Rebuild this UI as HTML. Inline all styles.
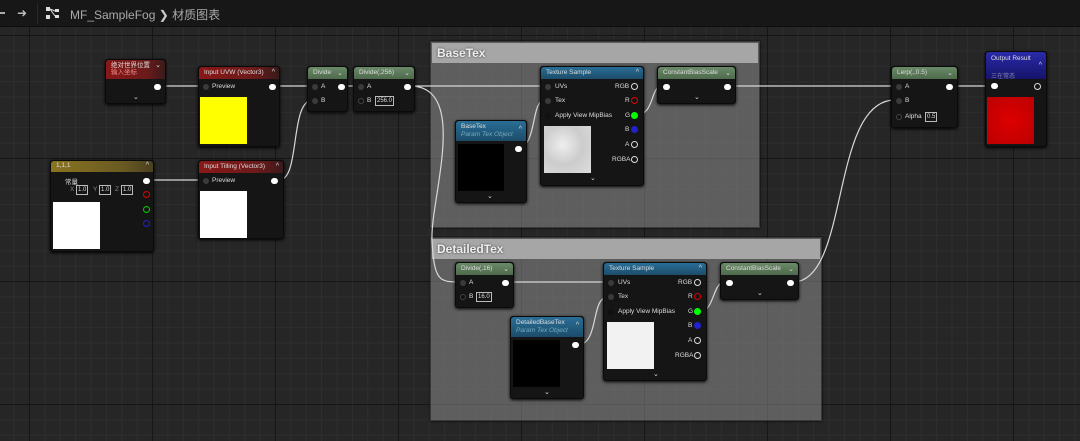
<!DOCTYPE html>
<html><head><meta charset="utf-8"><style>
*{margin:0;padding:0;box-sizing:border-box}
body{width:1080px;height:441px;overflow:hidden;background:#262626;font-family:"Liberation Sans","Noto Sans CJK SC",sans-serif;position:relative;color:#ddd}
#grid{position:absolute;left:0;top:27px;width:1080px;height:414px;
background-image:
linear-gradient(90deg,#161616 1px,transparent 1px),
linear-gradient(0deg,#161616 1px,transparent 1px),
linear-gradient(90deg,#2e2e2e 1px,transparent 1px),
linear-gradient(0deg,#2e2e2e 1px,transparent 1px);
background-size:123px 123px,123px 123px,15.375px 15.375px,15.375px 15.375px;
background-position:29px 9px,29px 9px,29px 9px,29px 9px}
#top{position:absolute;left:0;top:0;width:1080px;height:27px;background:#171717;border-bottom:1px solid #0e0e0e}
.cm{position:absolute;background:rgba(140,140,140,0.55);border:1px solid #3a3a3a;box-shadow:0 0 2px #000}
.cm .h{height:20px;background:#a6a6a6;color:#eee;font-size:12px;font-weight:bold;padding:3px 5px;text-shadow:0 0 2px #333;margin:1px}
.n{position:absolute;background:#151515;border-radius:3px;box-shadow:0 1px 3px #000;font-size:6.5px;color:#ddd;border:1px solid #0a0a0a}
.n .h{height:12px;border-radius:3px 3px 0 0;padding:2px 5px;font-size:6.5px;color:#ddd;position:relative}
.n .h .c{position:absolute;right:4px;top:2px;font-size:7px}
.t{position:absolute;white-space:nowrap}
.pin{position:absolute;width:6px;height:6px;border-radius:50%;background:#3a3a3a}
.po{position:absolute;width:7px;height:6px;border-radius:3px;background:#fff}
.ring{position:absolute;width:7px;height:7px;border-radius:50%;border:1.5px solid #ddd}
.box{position:absolute;border:1px solid #bbb;font-size:6px;padding:0 1px;line-height:8px;height:10px;color:#ddd}
.red{background:linear-gradient(90deg,#8a1818,#6a1a1a 70%,#3a1a1a)}
.grn{background:linear-gradient(#6a8a68,#4e6a4c)}
.blu{background:linear-gradient(#2a6e96,#1c4c6a)}
.gold{background:linear-gradient(90deg,#8a7420,#6a5a22 70%,#4a4020)}
</style></head><body>
<div id="grid"></div>
<div id="top">
<div class="t" style="left:0;top:12px;width:5px;height:2px;background:#aaa"></div>
<div class="t" style="left:17px;top:6px;color:#bbb;font-size:12px">➜</div>
<div class="t" style="left:37px;top:4px;width:1px;height:20px;background:#2a2a2a"></div>
<svg class="t" style="left:45px;top:6px" width="16" height="14"><rect x="1" y="1" width="4" height="4" fill="#ddd"/><rect x="1" y="9" width="4" height="4" fill="#ddd"/><rect x="10" y="3" width="4" height="3" fill="#ddd"/><rect x="10" y="9" width="4" height="3" fill="#ddd"/><path d="M5 3 L10 5 M5 3 L10 10" stroke="#ddd" stroke-width="1"/></svg>
<div class="t" style="left:70px;top:6px;font-size:12px;color:#aaa">MF_SampleFog <span style="color:#ccc">❯</span> 材质图表</div>
</div>

<div class="cm" style="left:430px;top:41px;width:330px;height:187px"><div class="h">BaseTex</div></div>
<div class="cm" style="left:430px;top:237px;width:392px;height:184px"><div class="h">DetailedTex</div></div>

<svg style="position:absolute;left:0;top:0" width="1080" height="441" fill="none" stroke="#d8d8d8" stroke-width="1.2">
<path d="M160 86 L205 86"/>
<path d="M273 86 L312 86"/>
<path d="M341 86 L358 86"/>
<path d="M150 180 L205 180"/>
<path d="M280 180 C300 178,290 102,312 100"/>
<path d="M410 86 C470 86,430 200,432 240 C434 282,440 282,460 282"/>
<path d="M410 86 L545 86"/>
<path d="M730 86 L895 86"/>
<path d="M953 86 L990 86"/>
<path d="M517 148 C538 148,530 100,545 100"/>
<path d="M636 115 C655 115,650 86,662 86"/>
<path d="M508 282 L608 282"/>
<path d="M577 345 C600 345,590 297,608 297"/>
<path d="M699 312 C715 312,712 282,725 282"/>
<path d="M793 282 C850 282,830 100,895 100"/>
</svg>

<!-- red world position -->
<div class="n" style="left:105px;top:59px;width:61px;height:45px">
<div class="h red" style="height:19px;line-height:7px;padding-top:2px">绝对世界位置<br><span style="color:#e88">输入坐标</span><span class="c">⌄</span></div>
<div class="po" style="left:48px;top:24px"></div>
<div class="t" style="left:27px;top:33px;font-size:7px">⌄</div>
</div>

<div class="n" style="left:198px;top:66px;width:82px;height:81px">
<div class="h red">Input UVW (Vector3)<span class="c">^</span></div>
<div class="pin" style="left:4px;top:17px"></div><div class="t" style="left:13px;top:16px">Preview</div>
<div class="po" style="left:70px;top:17px"></div>
<div class="t" style="left:1px;top:30px;width:47px;height:47px;background:#ff0"></div>
</div>

<div class="n" style="left:307px;top:66px;width:41px;height:46px">
<div class="h grn">Divide<span class="c">⌄</span></div>
<div class="pin" style="left:4px;top:17px"></div><div class="t" style="left:13px;top:16px">A</div>
<div class="po" style="left:30px;top:17px"></div>
<div class="pin" style="left:4px;top:31px"></div><div class="t" style="left:13px;top:30px">B</div>
</div>

<div class="n" style="left:353px;top:66px;width:62px;height:46px">
<div class="h grn">Divide(,256)<span class="c">⌄</span></div>
<div class="pin" style="left:4px;top:17px"></div><div class="t" style="left:13px;top:16px">A</div>
<div class="po" style="left:50px;top:17px"></div>
<div class="pin" style="left:4px;top:31px;background:#111;border:1px solid #444"></div><div class="t" style="left:13px;top:30px">B</div>
<div class="box" style="left:21px;top:29px">256.0</div>
</div>

<div class="n" style="left:50px;top:160px;width:104px;height:92px">
<div class="h gold" style="height:11px;padding-top:1px">1,1,1<span class="c" style="top:1px">^</span></div>
<div class="t" style="left:14px;top:15px">常量</div>
<div class="t" style="left:19px;top:25px;color:#888">X</div><div class="box" style="left:25px;top:24px">1.0</div>
<div class="t" style="left:42px;top:25px;color:#888">Y</div><div class="box" style="left:48px;top:24px">1.0</div>
<div class="t" style="left:64px;top:25px;color:#888">Z</div><div class="box" style="left:70px;top:24px">1.0</div>
<div class="po" style="left:92px;top:17px"></div>
<div class="ring" style="left:92px;top:30px;border-color:#d00"></div>
<div class="ring" style="left:92px;top:45px;border-color:#0c0"></div>
<div class="ring" style="left:92px;top:59px;border-color:#22c"></div>
<div class="t" style="left:2px;top:41px;width:47px;height:47px;background:#fff"></div>
</div>

<div class="n" style="left:198px;top:160px;width:86px;height:79px">
<div class="h red">Input Tilling (Vector3)<span class="c">^</span></div>
<div class="pin" style="left:4px;top:17px"></div><div class="t" style="left:13px;top:16px">Preview</div>
<div class="po" style="left:72px;top:17px"></div>
<div class="t" style="left:1px;top:30px;width:47px;height:47px;background:#fff"></div>
</div>

<div class="n" style="left:455px;top:120px;width:72px;height:83px">
<div class="h blu" style="height:20px;line-height:8px">BaseTex<br><i style="color:#7ab">Param Tex Object</i><span class="c" style="top:5px">^</span></div>
<div class="po" style="left:59px;top:25px"></div>
<div class="t" style="left:2px;top:23px;width:46px;height:47px;background:#000"></div>
<div class="t" style="left:31px;top:71px;font-size:7px">⌄</div>
</div>

<div class="n" style="left:540px;top:66px;width:104px;height:120px">
<div class="h blu">Texture Sample<span class="c">^</span></div>
<div class="pin" style="left:4px;top:17px"></div><div class="t" style="left:14px;top:16px">UVs</div>
<div class="pin" style="left:4px;top:31px"></div><div class="t" style="left:14px;top:30px">Tex</div>
<div class="pin" style="left:4px;top:46px;background:#111"></div><div class="t" style="left:14px;top:45px">Apply View MipBias</div>
<div class="t" style="left:74px;top:16px">RGB</div><div class="ring" style="left:90px;top:16px"></div>
<div class="t" style="left:84px;top:30px">R</div><div class="ring" style="left:90px;top:30px;border-color:#d00"></div>
<div class="t" style="left:84px;top:45px">G</div><div class="ring" style="left:90px;top:45px;border-color:#0f0;background:#0f0"></div>
<div class="t" style="left:84px;top:59px">B</div><div class="ring" style="left:90px;top:59px;border-color:#22c;background:#22c"></div>
<div class="t" style="left:84px;top:74px">A</div><div class="ring" style="left:90px;top:74px"></div>
<div class="t" style="left:71px;top:89px">RGBA</div><div class="ring" style="left:90px;top:89px"></div>
<div class="t" style="left:3px;top:59px;width:47px;height:47px;background:radial-gradient(circle at 40% 40%,#eee,#ccc 50%,#ddd)"></div>
<div class="t" style="left:49px;top:107px;font-size:7px">⌄</div>
</div>

<div class="n" style="left:657px;top:66px;width:79px;height:38px">
<div class="h grn">ConstantBiasScale<span class="c">⌄</span></div>
<div class="po" style="left:5px;top:17px"></div><div class="po" style="left:66px;top:17px"></div>
<div class="t" style="left:36px;top:26px;font-size:7px">⌄</div>
</div>

<div class="n" style="left:891px;top:66px;width:67px;height:62px">
<div class="h grn">Lerp(,,0.5)<span class="c">⌄</span></div>
<div class="pin" style="left:4px;top:17px"></div><div class="t" style="left:13px;top:16px">A</div>
<div class="po" style="left:54px;top:17px"></div>
<div class="pin" style="left:4px;top:31px"></div><div class="t" style="left:13px;top:30px">B</div>
<div class="pin" style="left:4px;top:47px;background:#111;border:1px solid #444"></div><div class="t" style="left:13px;top:46px">Alpha</div>
<div class="box" style="left:33px;top:45px">0.5</div>
</div>

<div class="n" style="left:985px;top:51px;width:62px;height:96px">
<div class="h" style="height:27px;background:linear-gradient(#2a2aa8,#14146a);line-height:9px">Output Result<span class="c" style="top:9px">^</span><br><br><span style="color:#88a;font-size:6px">三在常态</span></div>
<div class="po" style="left:5px;top:31px"></div><div class="ring" style="left:48px;top:31px"></div>
<div class="t" style="left:1px;top:45px;width:47px;height:47px;background:radial-gradient(#d00,#b00)"></div>
</div>

<div class="n" style="left:455px;top:262px;width:59px;height:46px">
<div class="h grn">Divide(,16)<span class="c">⌄</span></div>
<div class="pin" style="left:4px;top:17px"></div><div class="t" style="left:13px;top:16px">A</div>
<div class="po" style="left:46px;top:17px"></div>
<div class="pin" style="left:4px;top:31px;background:#111;border:1px solid #444"></div><div class="t" style="left:13px;top:30px">B</div>
<div class="box" style="left:20px;top:29px">16.0</div>
</div>

<div class="n" style="left:510px;top:316px;width:74px;height:83px">
<div class="h blu" style="height:20px;line-height:8px">DetailedBaseTex<br><i style="color:#7ab">Param Tex Object</i><span class="c" style="top:5px">^</span></div>
<div class="po" style="left:61px;top:25px"></div>
<div class="t" style="left:2px;top:23px;width:47px;height:47px;background:#000"></div>
<div class="t" style="left:33px;top:71px;font-size:7px">⌄</div>
</div>

<div class="n" style="left:603px;top:262px;width:104px;height:119px">
<div class="h blu">Texture Sample<span class="c">^</span></div>
<div class="pin" style="left:4px;top:17px"></div><div class="t" style="left:14px;top:16px">UVs</div>
<div class="pin" style="left:4px;top:31px"></div><div class="t" style="left:14px;top:30px">Tex</div>
<div class="pin" style="left:4px;top:46px;background:#111"></div><div class="t" style="left:14px;top:45px">Apply View MipBias</div>
<div class="t" style="left:74px;top:16px">RGB</div><div class="ring" style="left:90px;top:16px"></div>
<div class="t" style="left:84px;top:30px">R</div><div class="ring" style="left:90px;top:30px;border-color:#d00"></div>
<div class="t" style="left:84px;top:45px">G</div><div class="ring" style="left:90px;top:45px;border-color:#0f0;background:#0f0"></div>
<div class="t" style="left:84px;top:59px">B</div><div class="ring" style="left:90px;top:59px;border-color:#22c;background:#22c"></div>
<div class="t" style="left:84px;top:74px">A</div><div class="ring" style="left:90px;top:74px"></div>
<div class="t" style="left:71px;top:89px">RGBA</div><div class="ring" style="left:90px;top:89px"></div>
<div class="t" style="left:3px;top:59px;width:47px;height:47px;background:#f2f2f2"></div>
<div class="t" style="left:49px;top:107px;font-size:7px">⌄</div>
</div>

<div class="n" style="left:720px;top:262px;width:79px;height:38px">
<div class="h grn">ConstantBiasScale<span class="c">⌄</span></div>
<div class="po" style="left:5px;top:17px"></div><div class="po" style="left:66px;top:17px"></div>
<div class="t" style="left:36px;top:26px;font-size:7px">⌄</div>
</div>
</body></html>
